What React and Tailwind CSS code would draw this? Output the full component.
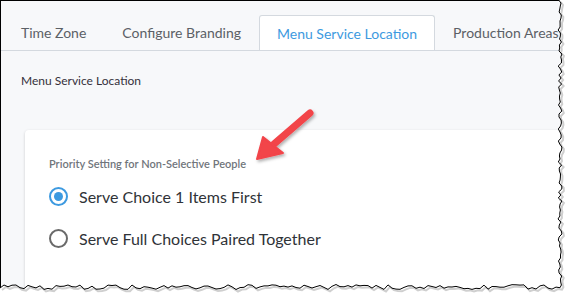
import React from 'react';

const tabs = ['Time Zone', 'Configure Branding', 'Menu Service Location', 'Production Areas'];

// cheap seeded jitter for the torn paper edge
const rnd = (i) => {
  const s = Math.sin(i * 12.9898 + 78.233) * 43758.5453;
  return s - Math.floor(s);
};

const buildEdge = () => {
  const pts = [];
  for (let y = 0, i = 0; y <= 286; y += 3, i++) {
    pts.push([560 + (rnd(i) - 0.5) * 4, y]);
  }
  for (let x = 560, i = 200; x >= 0; x -= 4, i++) {
    pts.push([x, 287 + (rnd(i) - 0.5) * 5]);
  }
  return pts;
};

const TornEdge = () => {
  const pts = buildEdge();
  const line = pts.map((p) => `${p[0].toFixed(1)},${p[1].toFixed(1)}`).join(' ');
  const fill = `568,0 ${line} 0,294 568,294`;
  const shadow = pts.map((p) => `${(p[0] + 2).toFixed(1)},${(p[1] + 2).toFixed(1)}`).join(' ');
  return (
    <svg className="absolute inset-0 pointer-events-none" width="568" height="294">
      <polygon points={fill} fill="#ffffff" />
      <polyline points={shadow} fill="none" stroke="#cfcfcf" strokeWidth="2" />
      <polyline points={line} fill="none" stroke="#000" strokeWidth="1" />
    </svg>
  );
};

const Arrow = () => (
  <svg className="absolute inset-0 pointer-events-none" width="568" height="294">
    <defs>
      <filter id="sh" x="-20%" y="-20%" width="140%" height="140%">
        <feDropShadow dx="1.5" dy="2" stdDeviation="1.5" floodColor="#000" floodOpacity="0.3" />
      </filter>
    </defs>
    <g filter="url(#sh)">
      <line x1="310" y1="113" x2="274" y2="144" stroke="#f2444a" strokeWidth="7" strokeLinecap="round" />
      <polygon points="257,159 263,137 283,153" fill="#f2444a" stroke="#f2444a" strokeWidth="2" strokeLinejoin="round" />
    </g>
  </svg>
);

const Radio = ({ checked, label }) => (
  <label className="flex items-center gap-[11px] cursor-pointer">
    {checked ? (
      <span className="w-[19px] h-[19px] rounded-full border-2 border-[#3d9ae0] flex items-center justify-center">
        <span className="w-[9px] h-[9px] rounded-full bg-[#3d9ae0]" />
      </span>
    ) : (
      <span className="w-[19px] h-[19px] rounded-full border-2 border-[#6a6a6a]" />
    )}
    <span className="text-[16px] leading-[22px] text-[#2f3338]">{label}</span>
  </label>
);

const App = () => {
  return (
    <div className="relative w-[568px] h-[294px] overflow-hidden bg-white" style={{ fontFamily: 'Lato, "Open Sans", sans-serif' }}>
      <div className="w-full h-full bg-[#f7f8fa] border-l border-t border-black">
        <div className="flex pl-[2px] pt-[14px] border-b border-[#d4d9df]">
          {tabs.map((t, i) => (
            <div
              key={t}
              className={
                i === 2
                  ? 'h-[35px] px-[17px] flex items-center bg-white border border-b-0 border-[#d4d9df] rounded-t-[3px] -mb-px text-[14px] text-[#3d9ae0] whitespace-nowrap'
                  : 'h-[35px] px-[18px] flex items-center text-[14px] text-[#5b6066] whitespace-nowrap'
              }
            >
              {t}
            </div>
          ))}
        </div>

        <div className="pl-[20px] pt-[21px] text-[12px] text-[#35303a]">Menu Service Location</div>

        <div className="ml-[24px] mt-[40px] h-[160px] bg-white rounded-[4px] shadow-[0_1px_3px_rgba(0,0,0,0.18)] pl-[24px] pt-[26px]">
          <div className="text-[11px] font-semibold text-[#70757b]">Priority Setting for Non-Selective People</div>
          <div className="flex flex-col gap-[20px] mt-[13px]">
            <Radio checked label="Serve Choice 1 Items First" />
            <Radio label="Serve Full Choices Paired Together" />
          </div>
        </div>
      </div>

      <Arrow />
      <TornEdge />
    </div>
  );
};

export default App;
